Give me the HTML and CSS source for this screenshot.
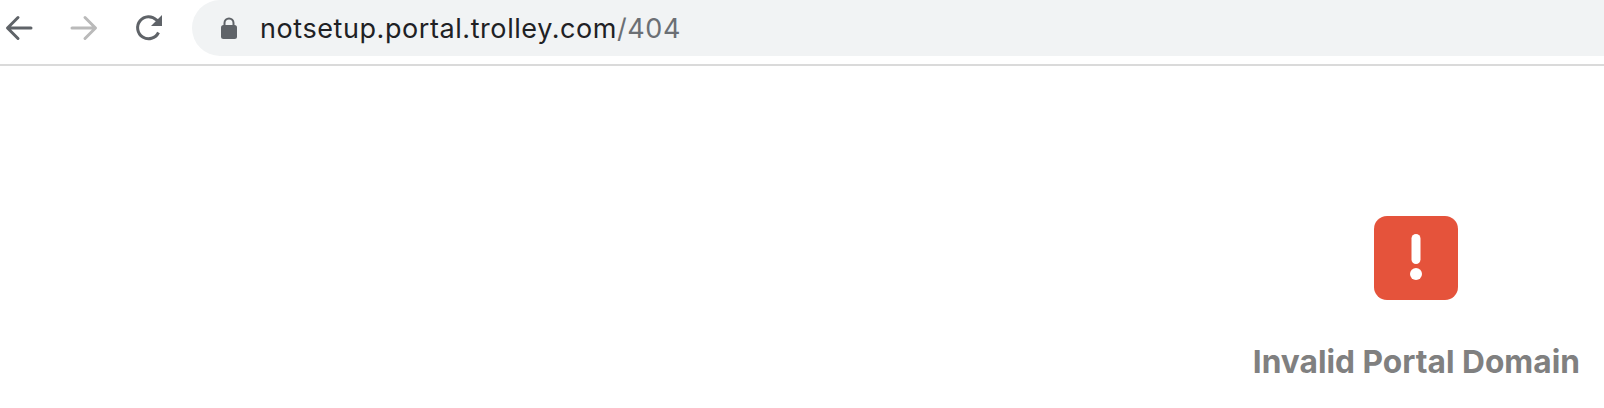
FILE: index.html
```html
<!DOCTYPE html>
<html lang="en">
<head>
  <meta charset="UTF-8">
  <meta name="viewport" content="width=device-width, initial-scale=1.0">
  <title>Invalid Portal Domain</title>
  <link rel="stylesheet" href="styles.css">
</head>
<body>
  <div class="toolbar">
    <div class="nav">
      <svg class="nav-icon" viewBox="0 0 28 28"><path d="M26 14H3M13 3.500 2.500 14 13 24.500" fill="none" stroke="#5f6368" stroke-width="3" stroke-linecap="round" stroke-linejoin="round"/></svg>
      <svg class="nav-icon" viewBox="0 0 28 28"><path d="M2 14H25M15 3.500 25.500 14 15 24.500" fill="none" stroke="#bababa" stroke-width="3" stroke-linecap="round" stroke-linejoin="round"/></svg>
      <svg class="nav-icon" viewBox="0 0 28 28"><path d="M23.500 18.500A11 11 0 1 1 21.500 6L25 9" fill="none" stroke="#5f6368" stroke-width="3"/><path d="M27 1V12H16Z" fill="#5f6368"/></svg>
    </div>
    <div class="omnibox">
      <svg class="lock" viewBox="0 0 18 22"><path d="M4.500 9V6a4.500 4.500 0 0 1 9 0V9" fill="none" stroke="#5f6368" stroke-width="2"/><rect x="1" y="8" width="16" height="14" rx="2.500" fill="#5f6368"/></svg>
      <span class="url">notsetup.portal.trolley.com<span class="url-path">/404</span></span>
    </div>
  </div>

  <div class="content">
    <div class="error">
      <svg class="error-icon" viewBox="0 0 84 84">
        <rect width="84" height="84" rx="13" fill="#e5533b"/>
        <rect x="37.500" y="18" width="9" height="30" rx="4.500" fill="#fff"/>
        <circle cx="42" cy="58" r="6" fill="#fff"/>
      </svg>
      <h1 class="error-title">Invalid Portal Domain</h1>
    </div>
  </div>
</body>
</html>
```

FILE: styles.css
```css
html, body {
  height: 100%;
}
body {
  margin: 0;
  display: flex;
  flex-direction: column;
  overflow: hidden;
  background-color: #fff;
  font-family: 'Inter', 'Liberation Sans', sans-serif;
}

/* browser bar */
.toolbar {
  display: flex;
  align-items: flex-start;
  height: 64px;
  flex-shrink: 0;
  border-bottom: 2px solid #dadada;
}
.nav {
  display: flex;
  align-items: center;
  gap: 37px;
  height: 55px;
  padding-left: 5px;
  width: 187px;
  flex-shrink: 0;
}
.nav-icon {
  width: 28px;
  height: 28px;
}
.omnibox {
  flex: 1;
  display: flex;
  align-items: center;
  height: 56px;
  padding-left: 28px;
  background-color: #f1f3f4;
  border-radius: 28px 0 0 28px;
}
.lock {
  width: 18px;
  height: 22px;
  margin-right: 22px;
}
.url {
  font-size: 27px;
  letter-spacing: 0.570px;
  color: #202124;
}
.url-path {
  color: #6b6f74;
}

/* error block */
.content {
  flex: 1;
  display: flex;
  justify-content: flex-end;
  padding: 150px 24px 0 0;
}
.error {
  display: flex;
  flex-direction: column;
  align-items: center;
}
.error-icon {
  width: 84px;
  height: 84px;
}
.error-title {
  margin: 44px 0 0;
  font-size: 31.700px;
  font-weight: 700;
  line-height: 36px;
  color: #808080;
}
```
